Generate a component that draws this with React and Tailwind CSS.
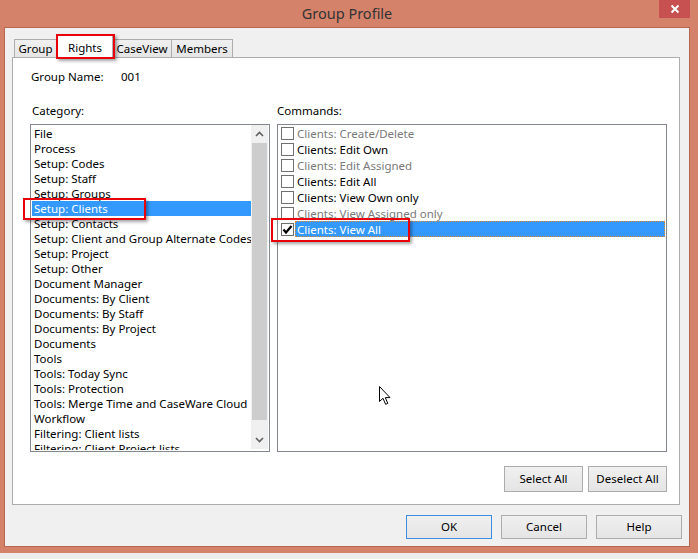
import React from "react";

const cats = [
  "File",
  "Process",
  "Setup: Codes",
  "Setup: Staff",
  "Setup: Groups",
  "Setup: Clients",
  "Setup: Contacts",
  "Setup: Client and Group Alternate Codes",
  "Setup: Project",
  "Setup: Other",
  "Document Manager",
  "Documents: By Client",
  "Documents: By Staff",
  "Documents: By Project",
  "Documents",
  "Tools",
  "Tools: Today Sync",
  "Tools: Protection",
  "Tools: Merge Time and CaseWare Cloud",
  "Workflow",
  "Filtering: Client lists",
  "Filtering: Client Project lists",
];

const cmds = [
  { t: "Clients: Create/Delete", d: true },
  { t: "Clients: Edit Own" },
  { t: "Clients: Edit Assigned", d: true },
  { t: "Clients: Edit All" },
  { t: "Clients: View Own only" },
  { t: "Clients: View Assigned only", d: true },
  { t: "Clients: View All", sel: true, checked: true },
];

function Btn({ children, w, focus }) {
  return (
    <div
      className={`${w} h-full flex items-center justify-center border bg-gradient-to-b from-[#F0F0F0] to-[#E5E5E5] text-[11.5px] text-black ${
        focus ? "border-[#3C8FE0]" : "border-[#ACACAC]"
      }`}
    >
      {children}
    </div>
  );
}

function Chevron({ up }) {
  return (
    <svg width="9" height="6" viewBox="0 0 9 6">
      <path
        d={up ? "M1 5 L4.5 1.5 L8 5" : "M1 1 L4.5 4.5 L8 1"}
        fill="none"
        stroke="#606060"
        strokeWidth="1.6"
      />
    </svg>
  );
}

export default function App() {
  return (
    <div className="relative w-[698px] h-[559px] overflow-hidden bg-[#D5826B] font-['Noto_Sans',sans-serif] flex flex-col">
      {/* Title bar */}
      <div className="h-[27px] flex shrink-0">
        <div className="flex-1" />
        <div className="text-[14.5px] text-[#333] leading-[26px] pl-[4px]">Group Profile</div>
        <div className="flex-1 flex justify-end pr-[8px]">
          <div className="w-[31px] h-[18px] bg-[#C75050] flex items-center justify-center">
            <svg width="10" height="10" viewBox="0 0 10 10">
              <path d="M1.5 1.5 L8.5 8.5 M8.5 1.5 L1.5 8.5" stroke="white" strokeWidth="2" />
            </svg>
          </div>
        </div>
      </div>

      {/* Client area */}
      <div className="ml-[4px] w-[686px] h-[520px] shrink-0 bg-[#F0F0F0] border border-[#B96650] pt-[7px] flex flex-col">
        {/* Tabs */}
        <div className="ml-[7px] h-[22px] flex items-end pl-[2px] text-[11.5px] text-black">
          <div className="w-[43px] h-[18px] border border-b-0 border-[#ADADAD] bg-gradient-to-b from-[#F0F0F0] to-[#E5E5E5] flex items-center justify-center pt-px">
            Group
          </div>
          <div className="w-[56px] h-[23px] -mb-px relative z-10 border border-b-0 border-[#ADADAD] bg-white flex items-start justify-center pt-[3px]">
            Rights
          </div>
          <div className="w-[59px] h-[18px] border border-b-0 border-l-0 border-[#ADADAD] bg-gradient-to-b from-[#F0F0F0] to-[#E5E5E5] flex items-center justify-center pt-px">
            CaseView
          </div>
          <div className="w-[61px] h-[18px] border border-b-0 border-l-0 border-[#ADADAD] bg-gradient-to-b from-[#F0F0F0] to-[#E5E5E5] flex items-center justify-center pt-px">
            Members
          </div>
        </div>

        {/* Panel */}
        <div className="ml-[7px] w-[668px] h-[448px] bg-white border border-[#ADADAD] flex flex-col pl-[17px] pr-[12px] pt-[11px] text-[11.5px] text-black">
          <div className="flex h-[15px] leading-[15px] pl-[1px]">
            <div className="w-[90px]">Group Name:</div>
            <div>001</div>
          </div>

          <div className="flex mt-[19px] h-[15px] leading-[15px]">
            <div className="w-[247px] pl-[2px]">Category:</div>
            <div>Commands:</div>
          </div>

          <div className="flex mt-[6px] gap-[7px] h-[328px]">
            {/* Category list */}
            <div className="w-[240px] h-full border border-[#828790] flex p-px">
              <div className="flex-1 overflow-hidden flex flex-col">
                {cats.map((c) => (
                  <div
                    key={c}
                    className={`h-[15px] shrink-0 leading-[15px] pl-[2px] whitespace-nowrap ${
                      c === "Setup: Clients" ? "bg-[#3399FF] text-white" : "text-black"
                    }`}
                  >
                    {c}
                  </div>
                ))}
              </div>
              <div className="w-[17px] h-full -my-px bg-[#F0F0F0] flex flex-col">
                <div className="h-[18px] flex items-center justify-center">
                  <Chevron up />
                </div>
                <div className="mx-[1px] h-[277px] bg-[#CDCDCD]" />
                <div className="flex-1" />
                <div className="h-[18px] flex items-center justify-center">
                  <Chevron />
                </div>
              </div>
            </div>

            {/* Commands list */}
            <div className="w-[390px] h-full border border-[#828790] flex flex-col">
              {cmds.map((c) => (
                <div key={c.t} className="h-[16px] flex items-center pl-[3px] pr-[1px]">
                  <div className="w-[13px] h-[13px] border border-[#6F6F6F] bg-white flex items-center justify-center shrink-0">
                    {c.checked && (
                      <svg width="11" height="11" viewBox="0 0 11 11">
                        <path d="M1.5 5.5 L4 8.5 L9.5 2" fill="none" stroke="black" strokeWidth="2.2" />
                      </svg>
                    )}
                  </div>
                  <div
                    className={`ml-px flex-1 h-full leading-[15px] pl-px whitespace-nowrap ${
                      c.sel
                        ? "bg-[#3399FF] text-white border border-dotted border-[#D9893A]"
                        : c.d
                        ? "text-[#7A7A7A] border border-transparent"
                        : "text-black border border-transparent"
                    }`}
                  >
                    {c.t}
                  </div>
                </div>
              ))}
            </div>
          </div>

          <div className="flex justify-end gap-[5px] mt-[14px] h-[26px]">
            <Btn w="w-[79px]">Select All</Btn>
            <Btn w="w-[79px]">Deselect All</Btn>
          </div>
        </div>

        {/* Bottom buttons */}
        <div className="flex justify-end gap-[9px] mt-[10px] h-[24px] pr-[7px]">
          <Btn w="w-[86px]" focus>OK</Btn>
          <Btn w="w-[86px]">Cancel</Btn>
          <Btn w="w-[86px]">Help</Btn>
        </div>
      </div>
      <div className="h-[6px] shrink-0" />
      <div className="flex-1 bg-[#EDEDED]" />

      {/* Red annotation boxes */}
      <div className="absolute left-[56px] top-[34px] w-[59px] h-[25px] border-2 border-[#E8000B] shadow-[2px_2px_3px_rgba(0,0,0,0.35)] z-20" />
      <div className="absolute left-[23px] top-[198px] w-[123px] h-[22px] border-2 border-[#E8000B] shadow-[2px_2px_3px_rgba(0,0,0,0.35)] z-20" />
      <div className="absolute left-[271px] top-[218px] w-[139px] h-[24px] border-2 border-[#E8000B] shadow-[2px_2px_3px_rgba(0,0,0,0.35)] z-20" />

      {/* Mouse cursor */}
      <svg className="absolute left-[379px] top-[386px] z-20" width="13" height="20" viewBox="0 0 13 20">
        <path
          d="M0.5 0.5 L0.5 15.5 L4 12.3 L6.6 18.3 L8.8 17.4 L6.3 11.6 L11 11.6 Z"
          fill="white"
          stroke="black"
          strokeWidth="1"
          strokeLinejoin="miter"
        />
      </svg>
    </div>
  );
}
